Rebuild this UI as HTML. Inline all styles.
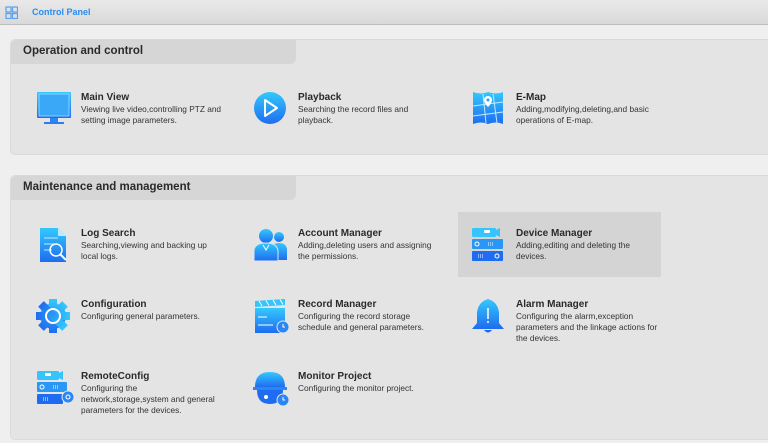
<!DOCTYPE html>
<html><head><meta charset="utf-8"><style>
*{margin:0;padding:0;box-sizing:border-box}
body{width:768px;height:443px;background:#efefef;font-family:"Liberation Sans",sans-serif;position:relative;overflow:hidden;color:#333}
.top{position:absolute;left:0;top:0;width:768px;height:25px;background:linear-gradient(#e9e9e9,#d9d9d9);border-bottom:1px solid #bdbdbd}
.top .t{position:absolute;left:32px;top:7px;font-size:9px;font-weight:bold;color:#2b8cf0}
.panel{position:absolute;left:10px;width:770px;background:#e4e4e4;border:1px solid #dadada;border-radius:5px}
.hdr{position:absolute;left:0;top:0;width:285px;height:24px;background:#d6d6d6;border-radius:5px 0 6px 0;font-size:11.5px;font-weight:bold;color:#2a2a2a;padding:5px 0 0 12px}
.it{position:absolute;width:210px}
.it svg{position:absolute;left:0;top:0}
.it b{position:absolute;left:45px;top:0;font-size:10px;color:#2a2a2a;white-space:nowrap}
.it p{position:absolute;left:45px;top:12px;font-size:8.3px;line-height:11px;color:#333;width:146px}
.hl{position:absolute;left:458px;top:212px;width:203px;height:65px;background:#d4d4d4}
</style></head><body>
<svg width="0" height="0" style="position:absolute"><defs><linearGradient id="g" x1="0" y1="0" x2="0" y2="1"><stop offset="0" stop-color="#33c9fd"/><stop offset="1" stop-color="#1f6cf0"/></linearGradient></defs></svg>
<div class="top"><svg style="position:absolute;left:5px;top:6px" width="13" height="13"><g fill="none" stroke="#5aa0f0" stroke-width="1.2"><rect x="1" y="1" width="5" height="5"/><rect x="7.5" y="1" width="5" height="5"/><rect x="1" y="7.5" width="5" height="5"/><rect x="7.5" y="7.5" width="5" height="5"/></g></svg><span class="t">Control Panel</span></div>

<div class="panel" style="top:39px;height:116px"><div class="hdr">Operation and control</div></div>
<div class="panel" style="top:175px;height:265px"><div class="hdr">Maintenance and management</div></div>
<div class="hl"></div>

<div class="it" style="left:36px;top:92px"><svg width="36" height="34"><rect x="1" y="0" width="34" height="26" rx="1" fill="url(#g)"/><rect x="3" y="2" width="30" height="22" fill="#3aa7f7" stroke="#9be0ff" stroke-width=".8"/><rect x="14" y="26" width="8" height="4" fill="#2a86f2"/><rect x="8" y="30" width="20" height="2" fill="#2a7ef0"/></svg><b>Main View</b><p>Viewing live video,controlling PTZ and setting image parameters.</p></div>
<div class="it" style="left:253px;top:92px"><svg width="36" height="36"><circle cx="17" cy="16" r="16" fill="url(#g)"/><path d="M12 8 L24 16 L12 24 Z" fill="none" stroke="#fff" stroke-width="2" stroke-linejoin="round"/></svg><b>Playback</b><p>Searching the record files and playback.</p></div>
<div class="it" style="left:471px;top:92px"><svg width="36" height="34"><path d="M2 0 Q10 3 17 0 Q25 3 32 0 L32 32 Q25 29 17 32 Q10 29 2 32 Z" fill="url(#g)"/><path d="M2 14 L32 10 M2 24 L32 20 M12 2 L15 31 M22 2 L26 31" stroke="#bfeaff" stroke-width="1" fill="none"/><path d="M17 4 a4 4 0 0 1 4 4 c0 3-4 7-4 7 s-4-4-4-7 a4 4 0 0 1 4-4z" fill="#fff"/><circle cx="17" cy="8" r="1.5" fill="#2a9af5"/></svg><b>E-Map</b><p>Adding,modifying,deleting,and basic operations of E-map.</p></div>

<div class="it" style="left:36px;top:228px"><svg width="36" height="36"><path d="M4 0 L22 0 L30 8 L30 34 L4 34 Z" fill="url(#g)"/><path d="M22 0 L22 8 L30 8Z" fill="#bfe9ff"/><path d="M8 10 H22 M8 16 H18 M8 22 H16" stroke="#bfeaff" stroke-width="1"/><circle cx="20" cy="22" r="6" fill="none" stroke="#fff" stroke-width="1.5"/><path d="M24 26 L30 32" stroke="#fff" stroke-width="2"/></svg><b>Log Search</b><p>Searching,viewing and backing up<br>local logs.</p></div>
<div class="it" style="left:253px;top:228px"><svg width="36" height="36"><circle cx="26" cy="9" r="5" fill="url(#g)"/><path d="M18 32 L18 20 Q20 15 26 15 Q33 15 34 21 L34 32Z" fill="url(#g)"/><circle cx="13" cy="8" r="7" fill="url(#g)"/><path d="M1 33 L1 22 Q2 15 13 15 Q23 15 25 22 L25 33Z" fill="url(#g)" stroke="#e4e4e4" stroke-width="1"/><path d="M10 17 L13 22 L16 17" stroke="#fff" fill="none"/></svg><b>Account Manager</b><p>Adding,deleting users and assigning the permissions.</p></div>
<div class="it" style="left:471px;top:228px"><svg width="36" height="34"><rect x="1" y="0" width="24" height="9" rx="1.5" fill="#35c4fc"/><rect x="13" y="2" width="6" height="3" rx="1" fill="#fff"/><path d="M25 2 L29 0 L29 9 L25 7Z" fill="#35c4fc"/><rect x="1" y="11" width="31" height="10" rx="1" fill="#2a96f5"/><rect x="1" y="23" width="31" height="10" rx="1" fill="#1f6cf0"/><circle cx="6" cy="16" r="2" fill="none" stroke="#fff"/><circle cx="26" cy="28" r="2" fill="none" stroke="#fff"/><path d="M17 15h6M17 17h6M7 27h6M7 29h6" stroke="#fff" stroke-dasharray="1 1"/></svg><b>Device Manager</b><p>Adding,editing and deleting the devices.</p></div>

<div class="it" style="left:36px;top:299px"><svg width="36" height="36"><g fill="url(#g)"><circle cx="17" cy="17" r="13"/><g transform="translate(17 17)"><rect x="-4" y="-17" width="8" height="34"/><rect x="-4" y="-17" width="8" height="34" transform="rotate(45)"/><rect x="-4" y="-17" width="8" height="34" transform="rotate(90)"/><rect x="-4" y="-17" width="8" height="34" transform="rotate(135)"/></g></g><circle cx="17" cy="17" r="7" fill="none" stroke="#fff" stroke-width="2"/></svg><b>Configuration</b><p>Configuring general parameters.</p></div>
<div class="it" style="left:253px;top:299px"><svg width="36" height="36"><path d="M2 2 L32 0 L32 6 L2 8Z" fill="#35c4fc"/><path d="M6 2 l3 5 M13 1.5 l3 5 M20 1 l3 5 M27 .5 l3 5" stroke="#fff"/><rect x="2" y="9" width="30" height="25" fill="url(#g)"/><path d="M5 18 H14 M5 26 H20" stroke="#fff"/><circle cx="30" cy="28" r="6" fill="#2a86f2" stroke="#e4e4e4"/><path d="M30 25 V28 H32" stroke="#fff" fill="none"/></svg><b>Record Manager</b><p>Configuring the record storage schedule and general parameters.</p></div>
<div class="it" style="left:471px;top:299px"><svg width="36" height="38"><path d="M17 0 Q7 3 6 14 L6 24 L1 30 L33 30 L28 24 L28 14 Q27 3 17 0Z" fill="url(#g)"/><path d="M13 31 Q17 36 21 31Z" fill="#1f6cf0"/><path d="M17 9 V20 M17 22 V24" stroke="#fff" stroke-width="1.5"/></svg><b>Alarm Manager</b><p>Configuring the alarm,exception parameters and the linkage actions for the devices.</p></div>

<div class="it" style="left:36px;top:371px"><svg width="40" height="34"><rect x="1" y="0" width="22" height="9" rx="1.5" fill="#35c4fc"/><rect x="9" y="2" width="6" height="3" fill="#fff"/><path d="M23 2 L27 0 L27 9 L23 7Z" fill="#35c4fc"/><rect x="1" y="11" width="30" height="10" rx="1" fill="#2a96f5"/><rect x="1" y="23" width="26" height="10" rx="1" fill="#1f6cf0"/><circle cx="6" cy="16" r="2" fill="none" stroke="#fff"/><path d="M17 15h6M17 17h6M7 27h6M7 29h6" stroke="#fff" stroke-dasharray="1 1"/><circle cx="32" cy="26" r="6" fill="#2a86f2" stroke="#e4e4e4"/><circle cx="32" cy="26" r="2" fill="none" stroke="#fff"/></svg><b>RemoteConfig</b><p>Configuring the<br>network,storage,system and general parameters for the devices.</p></div>
<div class="it" style="left:253px;top:371px"><svg width="36" height="36"><path d="M2 16 Q2 1 17 1 Q32 1 32 16Z" fill="url(#g)"/><rect x="0" y="16" width="34" height="3" fill="#2a86f2"/><path d="M4 19 L30 19 Q30 33 17 33 Q4 33 4 19Z" fill="#1f6cf0"/><circle cx="13" cy="26" r="2" fill="#fff"/><circle cx="30" cy="29" r="6" fill="#2a86f2" stroke="#e4e4e4"/><path d="M30 26 V29 H32" stroke="#fff" fill="none"/></svg><b>Monitor Project</b><p>Configuring the monitor project.</p></div>
</body></html>
